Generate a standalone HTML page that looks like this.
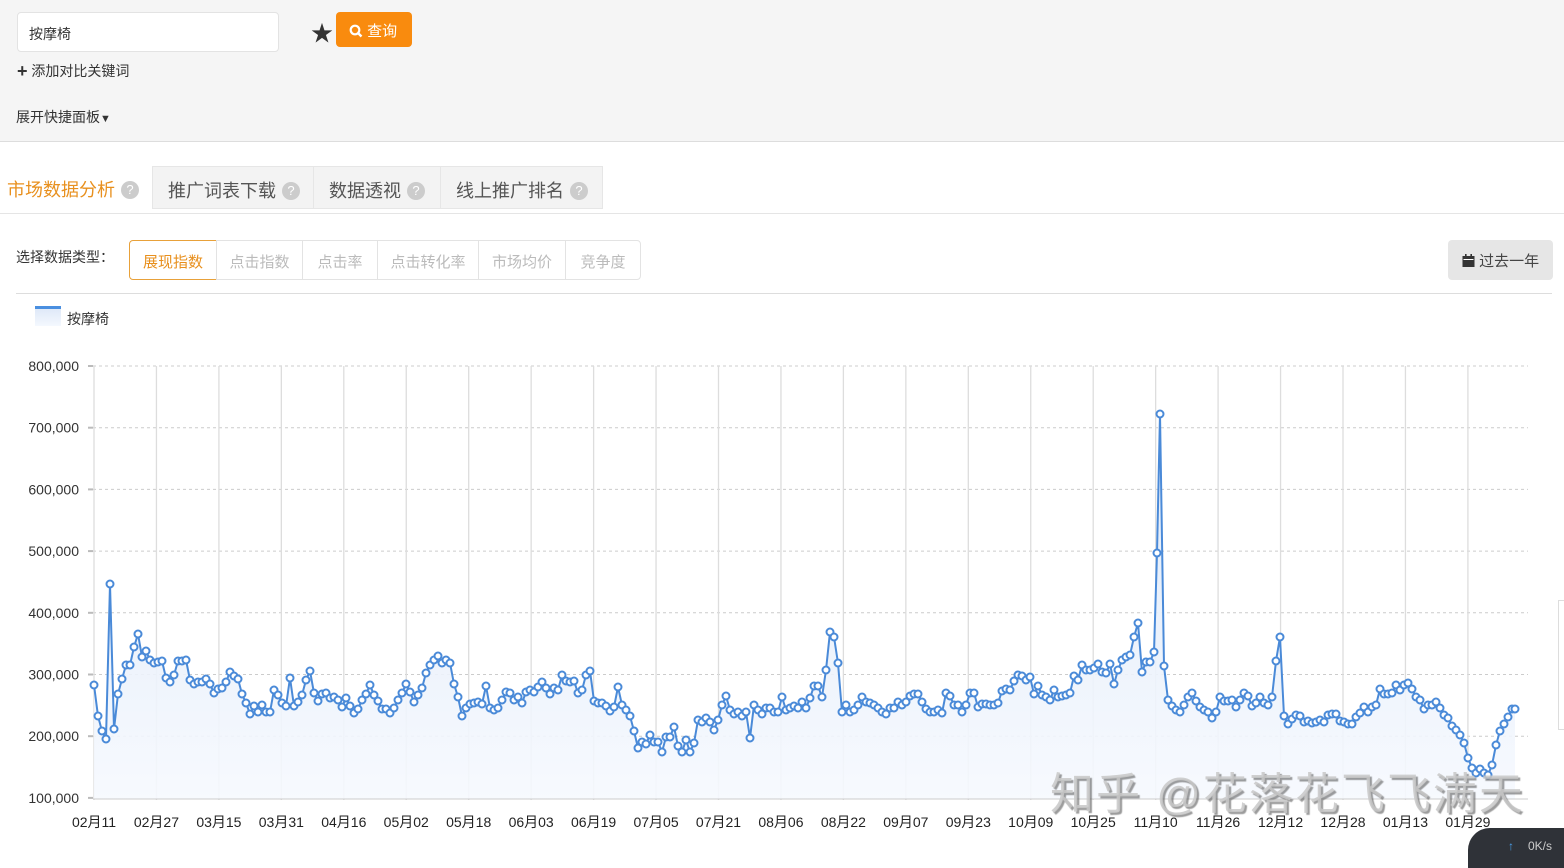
<!DOCTYPE html>
<html><head><meta charset="utf-8">
<style>
*{margin:0;padding:0;box-sizing:border-box}
body{width:1564px;height:852px;overflow:hidden;background:#fff;font-family:"Liberation Sans","Noto Sans CJK SC",sans-serif;position:relative;color:#333}
.top{position:absolute;left:0;top:0;width:1564px;height:142px;background:#f5f5f5;border-bottom:1px solid #ddd}
.inp{position:absolute;left:17px;top:12px;width:262px;height:40px;background:#fff;border:1px solid #e3e3e3;border-radius:4px;font-size:14px;padding:11px 11px;color:#333}
.star{position:absolute;left:311px;top:16px;font-size:22px;color:#333}
.btn{position:absolute;left:336px;top:12px;width:76px;height:35px;background:#f98b0e;border-radius:4px;color:#fff;font-size:15px;padding:8px 0 0 13px}
.add{position:absolute;left:17px;top:61px;font-size:14px;color:#333}
.exp{position:absolute;left:16px;top:107px;font-size:14px;color:#333}
.tab{position:absolute;top:166px;height:43px;background:#f3f3f3;border:1px solid #e6e6e6;font-size:18px;color:#555;padding:10px 0 0 15px}
.q{display:inline-block;width:18px;height:18px;border-radius:50%;background:#ccc;color:#fff;font-size:13px;text-align:center;line-height:18px;vertical-align:2px;margin-left:6px}
.line{position:absolute;left:0;top:213px;width:1564px;height:1px;background:#e5e5e5}
.lbl{position:absolute;left:16px;top:247px;font-size:14px;color:#333}
.seg{position:absolute;top:240px;height:40px;border:1px solid #e3e3e3;font-size:15px;color:#bbb;text-align:center;padding-top:10px}
.year{position:absolute;left:1448px;top:240px;width:105px;height:40px;background:#e6e6e6;border-radius:4px;font-size:15px;color:#444;padding:10px 0 0 14px}
.hr2{position:absolute;left:16px;top:293px;width:1536px;height:1px;background:#ddd}
.leg{position:absolute;left:35px;top:306px;width:26px;height:20px;background:linear-gradient(#4a8fe0 0,#4a8fe0 3px,#dfe9f8 3px,#f4f8fe)}
.legt{position:absolute;left:67px;top:309px;font-size:14px;color:#333}
svg.ch{position:absolute;left:0;top:0}
.wm{position:absolute;left:1050px;top:758px;font-size:44px;color:rgba(200,200,200,0.85);letter-spacing:2px;text-shadow:2px 2px 1px rgba(90,90,90,0.6);white-space:nowrap}
.net{position:absolute;left:1468px;top:828px;width:110px;height:40px;background:#2f3238;border-radius:22px 0 0 0;color:#ccc;font-size:12px;padding:11px 0 0 40px}
.rbox{position:absolute;left:1558px;top:600px;width:10px;height:130px;border:1px solid #ddd;border-right:none}
</style></head><body>
<div class="top">
<div class="inp">按摩椅</div>
<div class="star">★</div>
<div class="btn"><svg width="14" height="14" viewBox="0 0 14 14" style="vertical-align:-2px"><circle cx="6" cy="6" r="4.3" fill="none" stroke="#fff" stroke-width="2.2"/><path d="M9 9l3.5 3.5" stroke="#fff" stroke-width="2.4"/></svg> 查询</div>
<div class="add"><b style="font-size:18px;vertical-align:-1px">+</b> 添加对比关键词</div>
<div class="exp">展开快捷面板<span style="font-size:11px">▼</span></div>
</div>
<div class="tab" style="left:0;width:153px;background:#fff;border:none;color:#e8901e;padding-left:7px">市场数据分析<span class="q">?</span></div>
<div class="tab" style="left:152px;width:162px;">推广词表下载<span class="q">?</span></div>
<div class="tab" style="left:313px;width:128px;">数据透视<span class="q">?</span></div>
<div class="tab" style="left:440px;width:163px;">线上推广排名<span class="q">?</span></div>
<div class="line"></div>
<div class="lbl">选择数据类型：</div>
<div class="seg" style="left:129px;width:88px;border-color:#e8a13a;color:#e8901e;border-radius:4px 0 0 4px">展现指数</div>
<div class="seg" style="left:216px;width:87px">点击指数</div>
<div class="seg" style="left:302px;width:76px">点击率</div>
<div class="seg" style="left:377px;width:102px">点击转化率</div>
<div class="seg" style="left:478px;width:88px">市场均价</div>
<div class="seg" style="left:565px;width:76px;border-radius:0 4px 4px 0">竞争度</div>
<div class="year"><svg width="13" height="13" viewBox="0 0 13 13" style="vertical-align:-1px"><rect x="0.5" y="2" width="12" height="11" fill="#333"/><rect x="3" y="0" width="1.6" height="3" fill="#333"/><rect x="8.4" y="0" width="1.6" height="3" fill="#333"/><rect x="1.5" y="5" width="10" height="1" fill="#fff"/></svg> 过去一年</div>
<div class="hr2"></div>
<div class="leg"></div><div class="legt">按摩椅</div>
<svg class="ch" id="c" width="1564" height="852"></svg>
<div class="wm">知乎 @花落花飞飞满天</div>
<div class="rbox"></div>
<div class="net"><span style="color:#4a9ee8;margin-right:14px">↑</span>0K/s</div>
<script>
var P=[94,685,98,716,102,731,106,739,110,584,114,729,118,694,122,679,126,665,130,665,134,647,138,634,142,657,146,651,150,660,154,663,158,662,162,661,166,678,170,682,174,675,178,661,182,661,186,660,190,680,194,684,198,682,202,682,206,679,210,684,214,693,218,689,222,688,226,682,230,672,234,676,238,679,242,694,246,703,250,714,254,706,258,712,262,705,266,712,270,712,274,690,278,695,282,703,286,706,290,678,294,706,298,702,302,695,306,680,310,671,314,693,318,701,322,694,326,693,330,698,334,697,338,700,342,707,346,698,350,706,354,713,358,709,362,700,366,694,370,685,374,695,378,701,382,709,386,709,390,713,394,708,398,700,402,693,406,684,410,692,414,702,418,695,422,688,426,673,430,665,434,660,438,656,442,663,446,660,450,663,454,684,458,697,462,716,466,708,470,704,474,703,478,702,482,704,486,686,490,708,494,710,498,708,502,700,506,692,510,693,514,700,518,697,522,703,526,692,530,690,534,692,538,687,542,682,546,688,550,694,554,688,558,690,562,675,566,681,570,682,574,681,578,693,582,690,586,675,590,671,594,701,598,703,602,703,606,706,610,711,614,707,618,687,622,705,626,710,630,716,634,731,638,748,642,742,646,744,650,735,654,742,658,742,662,752,666,737,670,737,674,727,678,746,682,752,686,740,690,752,694,743,698,720,702,722,706,718,710,722,714,730,718,720,722,705,726,696,730,710,734,714,738,712,742,716,746,712,750,738,754,705,758,710,762,714,766,708,770,708,774,712,778,712,782,697,786,710,790,708,794,706,798,708,802,702,806,708,810,698,814,686,818,686,822,697,826,670,830,632,834,637,838,663,842,712,846,705,850,712,854,710,858,705,862,697,866,702,870,703,874,705,878,708,882,712,886,714,890,708,894,708,898,702,902,705,906,702,910,696,914,694,918,694,922,702,926,709,930,712,934,712,938,710,942,713,946,693,950,696,954,705,958,705,962,712,966,705,970,693,974,693,978,707,982,704,986,704,990,705,994,705,998,703,1002,691,1006,689,1010,690,1014,681,1018,675,1022,676,1026,680,1030,677,1034,694,1038,686,1042,695,1046,697,1050,700,1054,690,1058,697,1062,696,1066,695,1070,693,1074,676,1078,680,1082,665,1086,670,1090,670,1094,668,1098,664,1102,672,1106,673,1110,664,1114,684,1118,670,1122,660,1126,657,1130,655,1134,637,1138,623,1142,672,1146,662,1150,662,1154,652,1157,553,1160,414,1164,666,1168,700,1172,706,1176,710,1180,712,1184,705,1188,697,1192,693,1196,701,1200,707,1204,710,1208,712,1212,718,1216,712,1220,697,1224,701,1228,701,1232,700,1236,707,1240,700,1244,693,1248,696,1252,706,1256,703,1260,697,1264,703,1268,705,1272,697,1276,661,1280,637,1284,716,1288,724,1292,719,1296,715,1300,716,1304,722,1308,721,1312,723,1316,722,1320,720,1324,722,1328,715,1332,714,1336,714,1340,721,1344,722,1348,724,1352,724,1356,717,1360,713,1364,707,1368,712,1372,707,1376,705,1380,689,1384,694,1388,694,1392,693,1396,685,1400,690,1404,685,1408,683,1412,689,1416,697,1420,700,1424,709,1428,705,1432,705,1436,702,1440,708,1444,715,1448,718,1452,726,1456,730,1460,735,1464,743,1468,758,1472,768,1476,773,1480,769,1484,773,1488,775,1492,765,1496,745,1500,731,1504,724,1508,717,1512,709,1515,709];
var s='';
var labs=['800,000','700,000','600,000','500,000','400,000','300,000','200,000','100,000'];
for(var i=0;i<8;i++){var y=366+i*61.7;
s+='<line x1="88" x2="93" y1="'+y+'" y2="'+y+'" stroke="#bbb" stroke-width="2"/>';
if(i<7)s+='<line x1="93" x2="1528" y1="'+y+'" y2="'+y+'" stroke="#ccc" stroke-dasharray="3,3"/>';
s+='<text x="79" y="'+(y+5)+'" text-anchor="end" font-size="14" fill="#333" font-family="Liberation Sans">'+labs[i]+'</text>';}
var xl=['02月11','02月27','03月15','03月31','04月16','05月02','05月18','06月03','06月19','07月05','07月21','08月06','08月22','09月07','09月23','10月09','10月25','11月10','11月26','12月12','12月28','01月13','01月29'];
for(var i=0;i<23;i++){var x=94+i*62.45;
s+='<line x1="'+x+'" x2="'+x+'" y1="366" y2="800" stroke="#ddd" stroke-width="1.3"/>';
s+='<text x="'+x+'" y="827" text-anchor="middle" font-size="14" fill="#222" font-family="Liberation Sans, Noto Sans CJK SC, sans-serif">'+xl[i]+'</text>';}
s='<defs><linearGradient id="g" x1="0" y1="0" x2="0" y2="1"><stop offset="0" stop-color="#dbe7f8"/><stop offset="1" stop-color="#f6f9fe"/></linearGradient></defs>'+s;
var pts='';for(var i=0;i<P.length;i+=2)pts+=P[i]+','+P[i+1]+' ';
s+='<polygon points="94,799 '+pts+'1515,799" fill="url(#g)" opacity="0.9"/>';
s+='<line x1="93" x2="1528" y1="799" y2="799" stroke="#ccc"/>';
s+='<polyline points="'+pts+'" fill="none" stroke="#4a8ad8" stroke-width="2"/>';
for(var i=0;i<P.length;i+=2)s+='<circle cx="'+P[i]+'" cy="'+P[i+1]+'" r="3.5" fill="#fff" stroke="#4a8ad8" stroke-width="2"/>';
document.getElementById('c').innerHTML=s;
</script>
</body></html>
